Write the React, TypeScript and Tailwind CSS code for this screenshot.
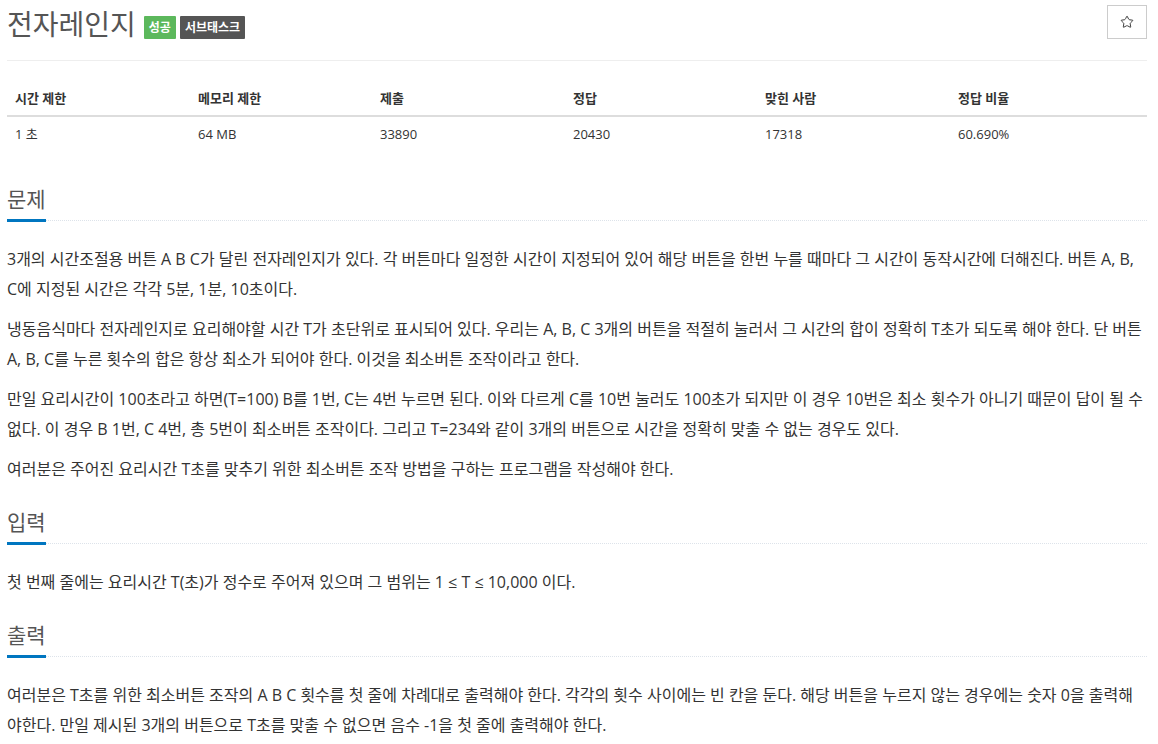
import { Star } from 'lucide-react'

const font = { fontFamily: '"Open Sans", "Noto Sans CJK KR", sans-serif' }

const stats = [
  ['시간 제한', '1 초'],
  ['메모리 제한', '64 MB'],
  ['제출', '33890'],
  ['정답', '20430'],
  ['맞힌 사람', '17318'],
  ['정답 비율', '60.690%'],
]

function Headline({ title }: { title: string }) {
  return (
    <div className="border-b border-dotted border-[#dde3ea] flex">
      <h2 className="-mb-[2px] border-b-[3px] border-[#0076c0] pb-[6px] text-[21px] leading-[28px] text-[#555]">{title}</h2>
    </div>
  )
}

// lines are split where the original page wraps them
function Para({ lines }: { lines: string[] }) {
  return (
    <p>
      {lines.map((l) => (
        <span key={l} className="block whitespace-nowrap">{l}</span>
      ))}
    </p>
  )
}

export default function App() {
  return (
    <div className="min-h-screen bg-white pl-[7px] pr-[11px] pt-[6px] text-[#333]" style={font}>
      <div className="flex items-start justify-between">
        <div className="flex items-center gap-[4px]">
          <h1 className="text-[28px] leading-[36px] text-[#555] mr-[4px]">전자레인지</h1>
          <span className="mt-[6px] bg-[#5cb85c] text-white text-[12px] font-bold px-[5px] h-[23px] leading-[23px] rounded-[1px]">성공</span>
          <span className="mt-[6px] bg-[#555] text-white text-[12px] font-bold px-[5px] h-[23px] leading-[23px] rounded-[1px]">서브태스크</span>
        </div>
        <button className="-mt-[1px] w-[40px] h-[34px] border border-[#ccc] flex items-center justify-center bg-white">
          <Star size={14} strokeWidth={1.6} className="text-[#333]" />
        </button>
      </div>
      <div className="mt-[18px] border-t border-[#eee]" />

      <div className="mt-[20px] text-[13px]">
        <div className="grid grid-cols-[183px_182px_193px_192px_193px_1fr] border-b-2 border-[#ddd]">
          {stats.map(([h]) => (
            <div key={h} className="px-2 py-2 font-bold leading-[18px]">{h}</div>
          ))}
        </div>
        <div className="grid grid-cols-[183px_182px_193px_192px_193px_1fr]">
          {stats.map(([h, v]) => (
            <div key={h} className="px-2 py-2 leading-[18px]">{v}</div>
          ))}
        </div>
      </div>

      <div className="mt-[34px]">
        <Headline title="문제" />
        <div className="mt-[23px] text-[16px] leading-[30px] space-y-[10px]">
          <Para lines={[
            '3개의 시간조절용 버튼 A B C가 달린 전자레인지가 있다. 각 버튼마다 일정한 시간이 지정되어 있어 해당 버튼을 한번 누를 때마다 그 시간이 동작시간에 더해진다. 버튼 A, B,',
            'C에 지정된 시간은 각각 5분, 1분, 10초이다.',
          ]} />
          <Para lines={[
            '냉동음식마다 전자레인지로 요리해야할 시간 T가 초단위로 표시되어 있다. 우리는 A, B, C 3개의 버튼을 적절히 눌러서 그 시간의 합이 정확히 T초가 되도록 해야 한다. 단 버튼',
            'A, B, C를 누른 횟수의 합은 항상 최소가 되어야 한다. 이것을 최소버튼 조작이라고 한다.',
          ]} />
          <Para lines={[
            '만일 요리시간이 100초라고 하면(T=100) B를 1번, C는 4번 누르면 된다. 이와 다르게 C를 10번 눌러도 100초가 되지만 이 경우 10번은 최소 횟수가 아니기 때문이 답이 될 수',
            '없다. 이 경우 B 1번, C 4번, 총 5번이 최소버튼 조작이다. 그리고 T=234와 같이 3개의 버튼으로 시간을 정확히 맞출 수 없는 경우도 있다.',
          ]} />
          <Para lines={['여러분은 주어진 요리시간 T초를 맞추기 위한 최소버튼 조작 방법을 구하는 프로그램을 작성해야 한다.']} />
        </div>
      </div>

      <div className="mt-[24px]">
        <Headline title="입력" />
        <div className="mt-[23px] text-[16px] leading-[30px]">
          <Para lines={['첫 번째 줄에는 요리시간 T(초)가 정수로 주어져 있으며 그 범위는 1 ≤ T ≤ 10,000 이다.']} />
        </div>
      </div>

      <div className="mt-[24px]">
        <Headline title="출력" />
        <div className="mt-[23px] text-[16px] leading-[30px]">
          <Para lines={[
            '여러분은 T초를 위한 최소버튼 조작의 A B C 횟수를 첫 줄에 차례대로 출력해야 한다. 각각의 횟수 사이에는 빈 칸을 둔다. 해당 버튼을 누르지 않는 경우에는 숫자 0을 출력해',
            '야한다. 만일 제시된 3개의 버튼으로 T초를 맞출 수 없으면 음수 -1을 첫 줄에 출력해야 한다.',
          ]} />
        </div>
      </div>
    </div>
  )
}
